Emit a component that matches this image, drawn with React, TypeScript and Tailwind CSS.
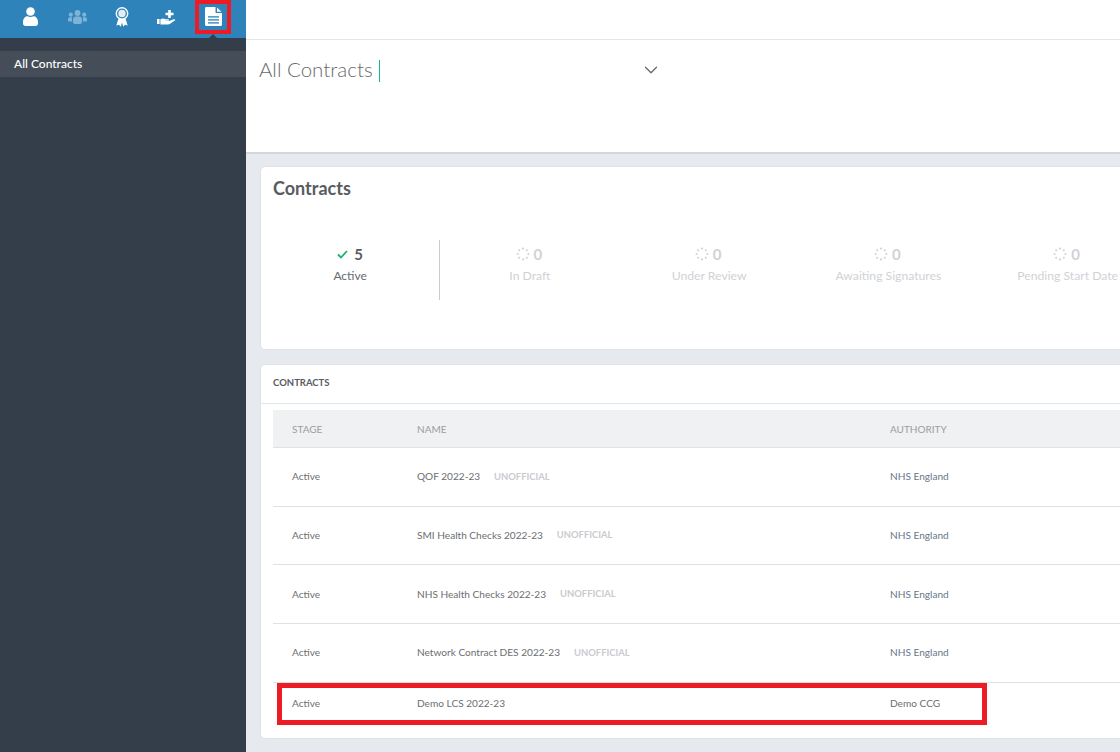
import React from "react";
import { LuChevronDown } from "react-icons/lu";

function Dots() {
  const pts = [0, 45, 90, 135, 180, 225, 270, 315];
  return (
    <svg width="14" height="14" viewBox="0 0 14 14" className="text-[#cfd2d6]">
      {pts.map((a) => (
        <circle
          key={a}
          cx={7 + 5.4 * Math.cos((a * Math.PI) / 180)}
          cy={7 + 5.4 * Math.sin((a * Math.PI) / 180)}
          r="1.050"
          fill="currentColor"
        />
      ))}
    </svg>
  );
}

function UserIcon() {
  return (
    <svg width="15" height="19" viewBox="0 0 15 19" fill="#fff" className="shrink-0">
      <circle cx="7.500" cy="4.500" r="4.300" />
      <path d="M0 15c0-4 2.500-5.800 4.500-5.800 1.800 1 4.200 1 6 0 2 0 4.500 1.800 4.500 5.800v1.500c0 1.500-1 2.500-2.500 2.500h-10C1 19 0 18 0 16.500z" />
    </svg>
  );
}

function UsersIcon() {
  return (
    <svg width="19" height="14" viewBox="0 0 19 14" fill="#7fb3d6" className="ml-[30px] mt-[3px] shrink-0">
      <circle cx="9.500" cy="3" r="2.900" />
      <circle cx="2.800" cy="4.700" r="2.100" />
      <circle cx="16.200" cy="4.700" r="2.100" />
      <path d="M5 9.500C5 7.500 6.500 6.500 7.500 6.500h4c1 0 2.500 1 2.500 3V12c0 1.200-1 2-2 2H7c-1 0-2-.8-2-2z" />
      <path d="M0 9.500C0 8 1 7.300 2 7.300h1.800C4.300 7.300 4 8.500 4 10v1.500H1c-.6 0-1-.5-1-1zM19 9.500C19 8 18 7.300 17 7.300h-1.800c-.5 0-.2 1.200-.2 2.700v1.500h3c.6 0 1-.5 1-1z" />
    </svg>
  );
}

function Ribbon() {
  return (
    <svg width="14" height="20" viewBox="0 0 14 20" fill="none" className="ml-[28px] shrink-0">
      <path d="M3.500 11.500 1.300 18.500l2.700-.8 1.800 2.100L7 15.500l1.200 4.300 1.800-2.100 2.700.8-2.200-7z" fill="#fff" />
      <circle cx="7" cy="6.500" r="6.400" fill="#fff" />
      <circle cx="7" cy="6.500" r="5" fill="#2e84ba" />
      <circle cx="7" cy="6.500" r="3.700" fill="#fff" fillOpacity="0.85" />
    </svg>
  );
}

function HandPlus() {
  return (
    <svg width="20" height="15" viewBox="0 0 20 15" fill="#fff" className="ml-[28px] mt-[3px] shrink-0">
      <path d="M11.200 0h2.600v2.700h2.700v2.600h-2.700V8h-2.600V5.300H8.500V2.700h2.700z" />
      <path d="M0 9h2.600v5H0zM3.400 9.300c2-1 3.600-1 5 0h2.900c1 0 1 1.400 0 1.400H8.300v.4h3.900l4.600-1.800c1.300-.4 2 .7 1 1.300l-5 3.500c-.5.300-1 .4-1.600.4H3.400z" />
    </svg>
  );
}

function FileIcon() {
  return (
    <svg width="17" height="19" viewBox="0 0 17 19" className="ml-[28px] shrink-0">
      <path d="M1.500 0H10.500v5c0 .6.400 1 1 1H17v11.500c0 .9-.6 1.500-1.500 1.500h-14C.6 19 0 18.400 0 17.500v-16C0 .6.600 0 1.500 0z" fill="#fff" />
      <path d="M12 .6 16.500 4.800H12z" fill="#fff" />
      <rect x="3" y="9" width="11" height="1.700" fill="#5c9fcb" />
      <rect x="3" y="12" width="11" height="1.700" fill="#5c9fcb" />
      <rect x="3" y="15" width="11" height="1.700" fill="#5c9fcb" />
    </svg>
  );
}

const stats = [
  { label: "In Draft" },
  { label: "Under Review" },
  { label: "Awaiting Signatures" },
  { label: "Pending Start Date" },
];

const rows = [
  { name: "QOF 2022-23", tag: true, auth: "NHS England" },
  { name: "SMI Health Checks 2022-23", tag: true, auth: "NHS England" },
  { name: "NHS Health Checks 2022-23", tag: true, auth: "NHS England" },
  { name: "Network Contract DES 2022-23", tag: true, auth: "NHS England" },
];

function Row({ name, tag, auth, last }: { name: string; tag?: boolean; auth: string; last?: boolean }) {
  return (
    <div className={`flex items-center text-[10.1px] text-[#6b6e70] ${last ? "h-[42px]" : "h-[58.7px] border-b border-[#dfe1e6]"}`}>
      <div className="w-[144px] pl-[19px]">Active</div>
      <div className="flex w-[473px] items-center">
        <span>{name}</span>
        {tag && <span className="ml-[14px] text-[9.4px] font-bold text-[#c9cbce]">UNOFFICIAL</span>}
      </div>
      <div className={last ? "text-[#6b6e70]" : "text-[#667788]"}>{auth}</div>
    </div>
  );
}

export default function App() {
  return (
    <div className="relative flex h-[752px] w-[1120px] overflow-hidden bg-[#e6eaee] font-['Lato',sans-serif]">
      <aside className="flex w-[246px] shrink-0 flex-col bg-[#333e4a]">
        <div className="relative flex h-[38px] items-start bg-[#2e84ba] pl-[23px] pt-[7px]">
          <UserIcon />
          <UsersIcon />
          <Ribbon />
          <HandPlus />
          <FileIcon />
          <span className="absolute left-[209px] top-[34px] h-0 w-0 border-x-[4px] border-b-[4px] border-x-transparent border-b-[#333e4a]" />
        </div>
        <div className="mt-[13px] flex h-[26px] items-center bg-[#454e58] pl-[14px] text-[12px] font-medium text-white">All Contracts</div>
      </aside>

      <main className="min-w-0 flex-1">
        <div className="h-[40px] border-b border-[#e4e5e7] bg-white" />
        <div className="relative h-[114px] border-b-2 border-[#d4d7da] bg-white">
          <div className="flex h-[59px] items-center pl-[13px]">
            <span className="text-[20.5px] font-light text-[#676a6c]">All Contracts</span>
            <span className="ml-[6px] mt-[3px] h-[22px] w-px bg-[#1ab394]" />
          </div>
          <LuChevronDown className="absolute left-[394px] top-[19px] text-[#676a6c]" size={22} strokeWidth={1.400} />
        </div>

        <section className="ml-[14px] mt-[12px] h-[184px] w-[900px] rounded-l-[5px] border border-[#dfe3e7] bg-white">
          <h2 className="pl-[12px] pt-[8px] text-[18px] font-bold text-[#595c5f]">Contracts</h2>
          <div className="mt-[38px] flex">
            <div className="flex h-[60px] w-[179.250px] flex-col items-center border-r border-[#c9cbce] pt-[3px]">
              <div className="flex items-center gap-[6px] text-[#595c5f]">
                <svg width="11" height="9" viewBox="0 0 11 9" fill="none"><path d="M1 4.500 4 7.500 10 1" stroke="#1ab370" strokeWidth="1.800" /></svg>
                <span className="text-[15px] font-bold">5</span>
              </div>
              <span className="mt-[1px] text-[12px] text-[#676a6c]">Active</span>
            </div>
            {stats.map((s) => (
              <div key={s.label} className="flex h-[60px] w-[179.250px] shrink-0 flex-col items-center pt-[3px] text-[#cfd2d6]">
                <div className="-ml-[2px] flex items-center gap-[4px]">
                  <Dots />
                  <span className="text-[15px] font-bold">0</span>
                </div>
                <span className="mt-[1px] whitespace-nowrap text-[12.2px]">{s.label}</span>
              </div>
            ))}
          </div>
        </section>

        <section className="ml-[14px] mt-[14px] h-[375px] w-[900px] rounded-l-[5px] border border-[#dfe3e7] bg-white">
          <div className="flex h-[39px] items-center border-b border-[#e4e5e7] pb-[2px] pl-[12px] text-[9.5px] font-bold text-[#595c5f]">CONTRACTS</div>
          <div className="ml-[12px] mt-[6px]">
            <div className="flex h-[38px] items-center border-b border-[#dfe1e6] bg-[#f0f1f3] pt-px text-[10px] text-[#9a9da1]">
              <div className="w-[144px] pl-[19px]">STAGE</div>
              <div className="w-[473px]">NAME</div>
              <div>AUTHORITY</div>
            </div>
            {rows.map((r) => (
              <Row key={r.name} {...r} />
            ))}
            <Row name="Demo LCS 2022-23" auth="Demo CCG" last />
          </div>
        </section>
      </main>

      <div className="absolute left-[195px] top-0 h-[34px] w-[36px] border-[4px] border-[#ed1c24]" />
      <div className="absolute left-[277px] top-[683px] h-[42px] w-[710px] border-[5px] border-[#ed1c24]" />
    </div>
  );
}
